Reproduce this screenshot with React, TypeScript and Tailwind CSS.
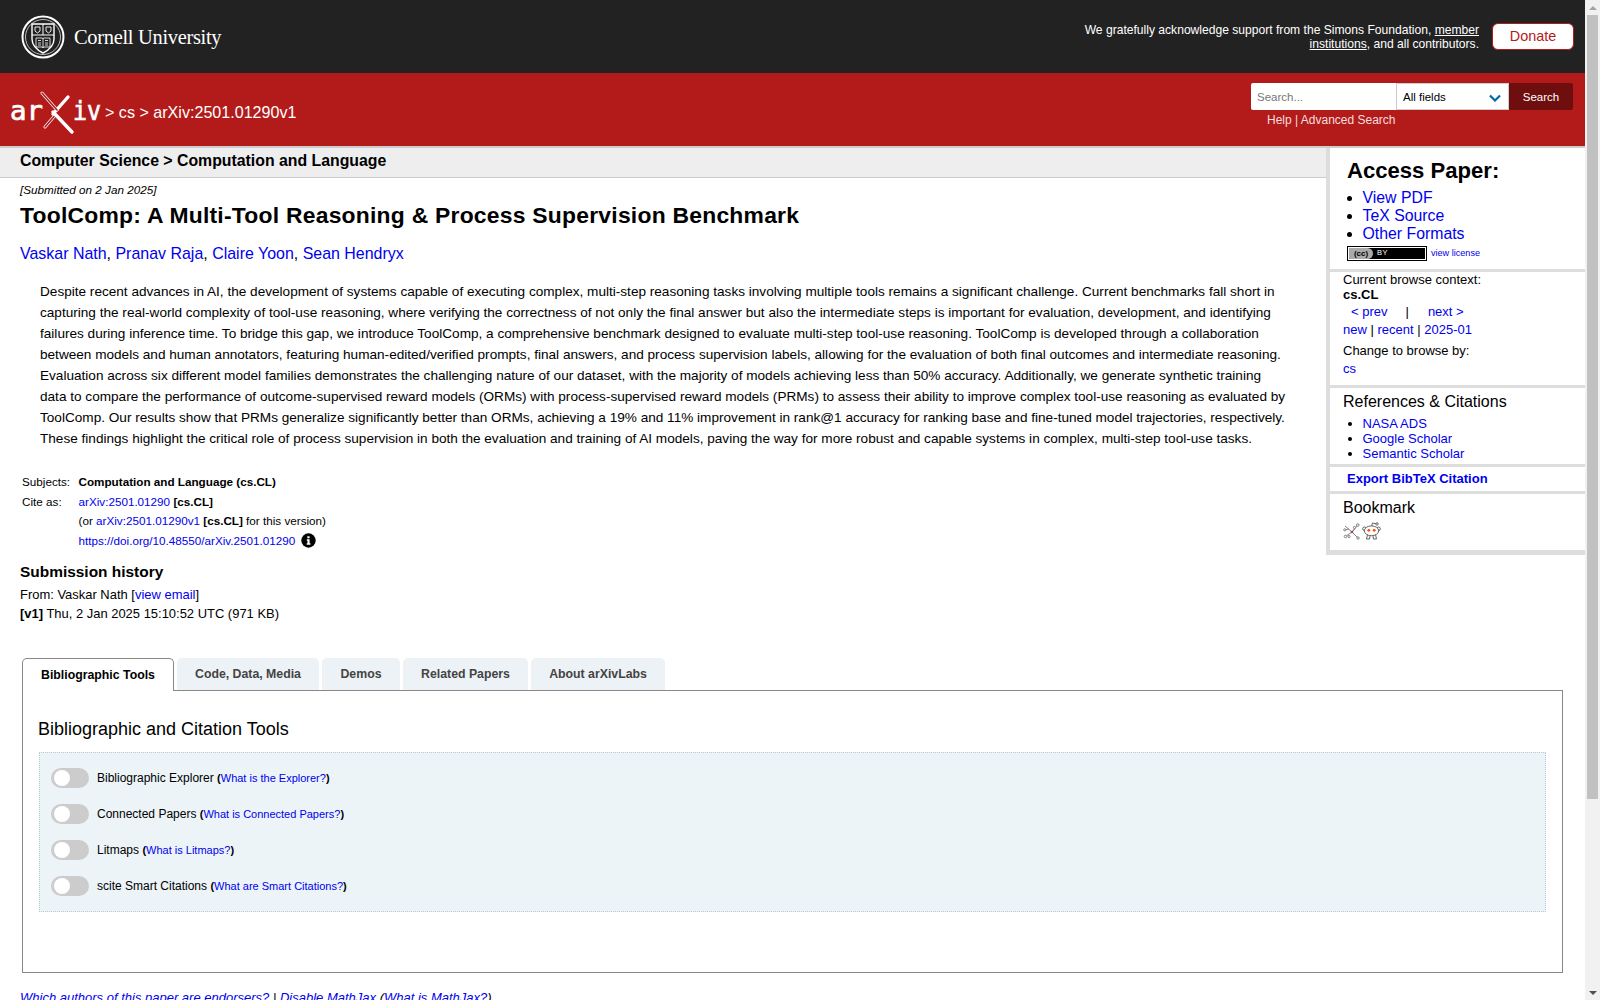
const authors = ["Vaskar Nath", "Pranav Raja", "Claire Yoon", "Sean Hendryx"];

const toggles = [
  ["Bibliographic Explorer", "What is the Explorer?"],
  ["Connected Papers", "What is Connected Papers?"],
  ["Litmaps", "What is Litmaps?"],
  ["scite Smart Citations", "What are Smart Citations?"],
];

function CornellLogo() {
  return (
    <svg width="44" height="44" viewBox="0 0 44 44" fill="none" stroke="#fff" className="shrink-0">
      <circle cx="22" cy="22" r="20.5" strokeWidth="2" />
      <circle cx="22" cy="22" r="17.5" strokeWidth="0.7" />
      <path d="M11 9h22v15c0 7-5 11-11 14-6-3-11-7-11-14z" strokeWidth="1.4" />
      <path d="M11 20h22M22 9v11" strokeWidth="1" />
      <path d="M14 12h5v4l-2.500 2-2.500-2zM25 12h5v4l-2.500 2-2.500-2z" strokeWidth="0.9" />
      <path d="M15 23h6.500l.5 1 .5-1H29v9h-6.500l-.5 1-.5-1H15zM22 24v9M17 25.500h3M17 28h3M17 30h3M24 25.500h3M24 28h3M24 30h3" strokeWidth="0.8" />
    </svg>
  );
}

function ArxivLogo() {
  return (
    <svg width="94" height="44" viewBox="0 0 94 44" className="shrink-0">
      <text x="0" y="29" fill="#fff" stroke="#fff" strokeWidth="0.7" fontSize="27" fontFamily="'DejaVu Sans Mono', monospace" textLength="33" lengthAdjust="spacingAndGlyphs">ar</text>
      <text x="63" y="29" fill="#fff" stroke="#fff" strokeWidth="0.7" fontSize="27" fontFamily="'DejaVu Sans Mono', monospace" textLength="28" lengthAdjust="spacingAndGlyphs">iv</text>
      <path d="M58 6 43 23M43 21l19 20" stroke="#fff" strokeWidth="3.400" strokeLinecap="round" fill="none" />
      <path d="M32 2 47 19M35 36l9-10.500" stroke="#fff" strokeWidth="3" strokeLinecap="round" fill="none" />
      <path d="M32 2 47 19M35 36l9-10.500" stroke="#b31b1b" strokeWidth="1.600" strokeLinecap="round" fill="none" />
    </svg>
  );
}

function InfoIcon() {
  return (
    <svg width="15" height="15" viewBox="0 0 15 15" className="shrink-0">
      <circle cx="7.500" cy="7.500" r="7.200" fill="#000" />
      <path d="M6.300 3.200h2.300v2H6.300zM5.800 6.200h2.800v4h.8v1.500H5.700v-1.500h.8V7.700h-.7z" fill="#fff" />
    </svg>
  );
}

function ScienceWiseIcon() {
  return (
    <svg width="18" height="17" viewBox="0 0 18 17" fill="none" stroke="#777" strokeWidth="0.9">
      <path d="M9 9 2 3M9 9l6-7M9 9l-6 4M9 9l6 6M9 9l3-4M6 6l-4 1" />
      <circle cx="1.800" cy="6.800" r="1.100" fill="#fff" />
      <circle cx="14.800" cy="2" r="1.300" fill="#fff" />
      <circle cx="11.500" cy="4.500" r="1.100" fill="#fff" />
      <circle cx="2.500" cy="13.500" r="1.300" fill="#fff" />
      <circle cx="6" cy="13.500" r="1.100" fill="#fff" />
      <circle cx="15" cy="15" r="1.200" fill="#fff" />
      <circle cx="9" cy="9" r="1.300" fill="#b5366b" stroke="none" />
    </svg>
  );
}

function RedditIcon() {
  return (
    <svg width="19" height="18" viewBox="0 0 19 18" fill="none" stroke="#555" strokeWidth="0.9">
      <path d="M9.500 4.500 10.500 1l3.500.8" />
      <circle cx="15" cy="1.900" r="1.200" fill="#fff" />
      <circle cx="2.500" cy="6.800" r="1.800" fill="#fff" />
      <circle cx="16.500" cy="6.800" r="1.800" fill="#fff" />
      <path d="M5.500 12.500 4.500 17h3l.5-3M13.500 12.500l1 4.500h-3l-.5-3" fill="#fff" />
      <ellipse cx="9.500" cy="8.800" rx="7.200" ry="4.900" fill="#fff" />
      <circle cx="6.800" cy="8.300" r="1.400" fill="#ff4500" stroke="none" />
      <circle cx="12.200" cy="8.300" r="1.400" fill="#ff4500" stroke="none" />
    </svg>
  );
}

function Toggle({ label, question }: { label: string; question: string }) {
  return (
    <div className="flex h-[36px] items-center gap-[8px]">
      <div className="flex h-[20px] w-[38px] items-center rounded-full bg-[#ccc] pl-[3px]">
        <div className="h-[16px] w-[16px] rounded-full bg-white" />
      </div>
      <span className="text-[12px] text-black">
        {label} <b className="text-[11px]">(</b>
        <a className="text-[11px] text-[#0000ee]">{question}</a>
        <b className="text-[11px]">)</b>
      </span>
    </div>
  );
}

export default function App() {
  return (
    <div className="flex h-screen overflow-hidden bg-white font-['Liberation_Sans',Arial,sans-serif] text-black">
      <div className="min-w-0 flex-1">
        {/* Cornell bar */}
        <div className="flex h-[73px] items-center justify-between bg-[#222] pl-[21px] pr-[11px]">
          <div className="flex items-center gap-[9px]">
            <CornellLogo />
            <span className="mt-[2px] font-['Liberation_Serif',serif] text-[20.460px] tracking-[-0.3px] text-white">Cornell University</span>
          </div>
          <div className="flex items-center gap-[13px]">
            <p className="w-[400px] text-right text-[12.100px] leading-[14px] text-white">
              We gratefully acknowledge support from the Simons Foundation, <a className="underline">member</a> <a className="underline">institutions</a>, and all contributors.
            </p>
            <a className="flex h-[27px] w-[82px] items-center justify-center rounded-[6px] border border-[#b31b1b] bg-white text-[14.400px] text-[#b31b1b]">Donate</a>
          </div>
        </div>

        {/* arXiv bar */}
        <div className="flex h-[73px] items-start justify-between bg-[#b31b1b] pl-[10px] pr-[12px]">
          <div className="flex items-center gap-[1px] pt-[18px]">
            <ArxivLogo />
            <span className="mt-[-1px] text-[16.100px] text-white">&gt; cs &gt; arXiv:2501.01290v1</span>
          </div>
          <div className="flex flex-col pt-[10px]">
            <div className="flex h-[27px] text-[11.500px]">
              <div className="flex w-[145px] items-center rounded-l-[2px] bg-white pl-[6px] pt-[2px] text-[#777]">Search...</div>
              <div className="flex w-[113px] items-center justify-between border border-[#ccc] bg-white pl-[6px] pr-[7px] pt-[2px]">
                <span>All fields</span>
                <svg width="12" height="8" viewBox="0 0 12 8" fill="none" stroke="#0068ac" strokeWidth="2.200">
                  <path d="m1 1.500 5 5 5-5" />
                </svg>
              </div>
              <div className="flex w-[64px] items-center justify-center rounded-r-[2px] bg-[#6e0e0e] pt-[3px] text-white">Search</div>
            </div>
            <div className="mt-[3px] pl-[16px] text-[12px] leading-[14px] text-[#f5dede]">Help | Advanced Search</div>
          </div>
        </div>

        <div className="h-[2px] bg-[#ccc]" />

        {/* Main */}
        <div className="flex items-start">
          <div className="min-w-0 flex-1">
            <div className="flex h-[30px] items-center border-b border-[#ccc] bg-[#eee] pb-[4px] pl-[20px] text-[15.840px] font-bold">
              Computer Science &gt; Computation and Language
            </div>
            <div className="pl-[20px] pr-[30px]">
              <div className="mt-[5px] text-[11.700px] italic leading-[13px]">[Submitted on 2 Jan 2025]</div>
              <h1 className="mt-[5px] text-[22.880px] font-bold leading-[28px] tracking-[0.24px]">
                ToolComp: A Multi-Tool Reasoning &amp; Process Supervision Benchmark
              </h1>
              <div className="mt-[15px] text-[15.960px] leading-[20px]">
                {authors.map((name, i) => (
                  <span key={name}>
                    <a className="text-[#0000ee]">{name}</a>
                    {i < authors.length - 1 ? ", " : ""}
                  </span>
                ))}
              </div>
              <p className="ml-[20px] mt-[17px] w-[1250px] text-[13.600px] leading-[21px]">
                Despite recent advances in AI, the development of systems capable of executing complex, multi-step reasoning tasks involving multiple tools remains a significant challenge. Current benchmarks fall short in capturing the real-world complexity of tool-use reasoning, where verifying the correctness of not only the final answer but also the intermediate steps is important for evaluation, development, and identifying failures during inference time. To bridge this gap, we introduce ToolComp, a comprehensive benchmark designed to evaluate multi-step tool-use reasoning. ToolComp is developed through a collaboration between models and human annotators, featuring human-edited/verified prompts, final answers, and process supervision labels, allowing for the evaluation of both final outcomes and intermediate reasoning. Evaluation across six different model families demonstrates the challenging nature of our dataset, with the majority of models achieving less than 50% accuracy. Additionally, we generate synthetic training data to compare the performance of outcome-supervised reward models (ORMs) with process-supervised reward models (PRMs) to assess their ability to improve complex tool-use reasoning as evaluated by ToolComp. Our results show that PRMs generalize significantly better than ORMs, achieving a 19% and 11% improvement in rank@1 accuracy for ranking base and fine-tuned model trajectories, respectively. These findings highlight the critical role of process supervision in both the evaluation and training of AI models, paving the way for more robust and capable systems in complex, multi-step tool-use tasks.
              </p>

              <div className="ml-[2px] mt-[26px] grid grid-cols-[56.500px_1fr] text-[11.700px] leading-[14px]">
                <div>Subjects:</div>
                <div className="font-bold">Computation and Language (cs.CL)</div>
                <div className="mt-[6px]">Cite as:</div>
                <div className="mt-[6px]">
                  <a className="text-[#0000ee]">arXiv:2501.01290</a> <b>[cs.CL]</b>
                </div>
                <div />
                <div className="mt-[5px]">
                  (or <a className="text-[#0000ee]">arXiv:2501.01290v1</a> <b>[cs.CL]</b> for this version)
                </div>
                <div />
                <div className="mt-[5px] flex items-center gap-[6px]">
                  <a className="text-[#0000ee]">https://doi.org/10.48550/arXiv.2501.01290</a>
                  <InfoIcon />
                </div>
              </div>

              <h2 className="mt-[15px] text-[15.440px] font-bold leading-[18px]">Submission history</h2>
              <div className="mt-[4px] text-[12.960px] leading-[19px]">
                From: Vaskar Nath [<a className="text-[#0000ee]">view email</a>]
                <br />
                <b>[v1]</b> Thu, 2 Jan 2025 15:10:52 UTC (971 KB)
              </div>
            </div>
          </div>

          {/* Side column */}
          <aside className="w-[259px] shrink-0 border-b-[5px] border-l-[4px] border-[#ddd] bg-white text-[13px]">
            <div className="h-[124px] border-b-[3px] border-[#ddd] pl-[17px] pt-[10px]">
              <h2 className="text-[22.100px] font-bold leading-[26px]">Access Paper:</h2>
              <ul className="mt-[5px] list-disc pl-[15.500px] text-[15.840px] leading-[18px] text-[#0000ee] marker:text-black">
                <li>View PDF</li>
                <li>TeX Source</li>
                <li>Other Formats</li>
              </ul>
              <div className="mt-[3px] flex items-center gap-[4px]">
                <div className="h-[15px] w-[80px] border border-black bg-white p-[1px]">
                  <div className="flex h-full bg-black">
                    <div className="flex w-[24px] items-center justify-center rounded-r-full bg-[#aaa] font-bold">
                      <span className="text-[8px] leading-none text-black">(cc)</span>
                    </div>
                    <span className="ml-[4px] text-[7.500px] leading-[10px] tracking-[0.5px] text-white">BY</span>
                  </div>
                </div>
                <a className="text-[9.100px] text-[#0000ee]">view license</a>
              </div>
            </div>

            <div className="h-[116px] border-b-[3px] border-[#ddd] pl-[13px]">
              <div className="leading-[15px]">Current browse context:</div>
              <div className="font-bold leading-[16px]">cs.CL</div>
              <div className="flex h-[18px] items-center">
                <a className="ml-[8px] text-[#0000ee]">&lt; prev</a>
                <span className="ml-[18px]">|</span>
                <a className="ml-[19px] text-[#0000ee]">next &gt;</a>
              </div>
              <div className="leading-[18px]">
                <a className="text-[#0000ee]">new</a> | <a className="text-[#0000ee]">recent</a> | <a className="text-[#0000ee]">2025-01</a>
              </div>
              <div className="mt-[3px] leading-[18px]">Change to browse by:</div>
              <a className="block leading-[18px] text-[#0000ee]">cs</a>
            </div>

            <div className="h-[79px] border-b-[3px] border-[#ddd] pl-[13px] pt-[4px]">
              <h3 className="text-[16px] leading-[20px]">References &amp; Citations</h3>
              <ul className="mt-[4px] list-disc pl-[19.500px] leading-[15px] text-[#0000ee] marker:text-black">
                <li>NASA ADS</li>
                <li>Google Scholar</li>
                <li>Semantic Scholar</li>
              </ul>
            </div>

            <div className="flex h-[27px] items-center border-b-[3px] border-[#ddd] pl-[17px] font-bold text-[#0000ee]">
              Export BibTeX Citation
            </div>

            <div className="h-[56px] pl-[13px] pt-[4px]">
              <h3 className="text-[16px] leading-[20px]">Bookmark</h3>
              <div className="mt-[4px] flex items-center gap-[1px]">
                <ScienceWiseIcon />
                <RedditIcon />
              </div>
            </div>
          </aside>
        </div>

        {/* Labs tabs */}
        <div className="mt-[34px] pl-[22px] pr-[22px]">
          <div className="flex h-[33px] items-end gap-[3px] text-[12.300px] font-bold">
            <div className="relative z-10 mb-[-1px] flex h-[33px] w-[152px] items-center justify-center rounded-t-[5px] border border-b-0 border-[#888] bg-white text-black">
              Bibliographic Tools
            </div>
            <div className="flex h-[32px] w-[142px] items-center justify-center rounded-t-[5px] bg-[#edf2f6] text-[#444]">Code, Data, Media</div>
            <div className="flex h-[32px] w-[78px] items-center justify-center rounded-t-[5px] bg-[#edf2f6] text-[#444]">Demos</div>
            <div className="flex h-[32px] w-[125px] items-center justify-center rounded-t-[5px] bg-[#edf2f6] text-[#444]">Related Papers</div>
            <div className="flex h-[32px] w-[134px] items-center justify-center rounded-t-[5px] bg-[#edf2f6] text-[#444]">About arXivLabs</div>
          </div>
          <div className="h-[283px] border border-[#888] pl-[15px] pr-[16px] pt-[26px]">
            <h3 className="text-[18px] leading-[24px]">Bibliographic and Citation Tools</h3>
            <div className="ml-[1px] mt-[11px] h-[160px] border border-dotted border-[#b5cbd8] bg-[#ecf4f8] pl-[11px] pt-[7px]">
              {toggles.map(([label, question]) => (
                <Toggle key={label} label={label} question={question} />
              ))}
            </div>
          </div>
          <div className="ml-[-2px] mt-[17px] text-[13px] italic leading-[16px]">
            <a className="text-[#0000ee]">Which authors of this paper are endorsers?</a> | <a className="text-[#0000ee]">Disable MathJax</a> (<a className="text-[#0000ee]">What is MathJax?</a>)
          </div>
        </div>
      </div>

      {/* Scrollbar */}
      <div className="flex h-full w-[15px] shrink-0 flex-col items-center bg-[#f1f1f1]">
        <div className="flex h-[15px] items-center">
          <div className="h-0 w-0 border-x-[4px] border-b-[4px] border-x-transparent border-b-[#a3a3a3]" />
        </div>
        <div className="h-[784px] w-[11px] bg-[#c1c1c1]" />
        <div className="flex-1" />
        <div className="flex h-[15px] items-center">
          <div className="h-0 w-0 border-x-[4px] border-t-[4px] border-x-transparent border-t-[#505050]" />
        </div>
      </div>
    </div>
  );
}
